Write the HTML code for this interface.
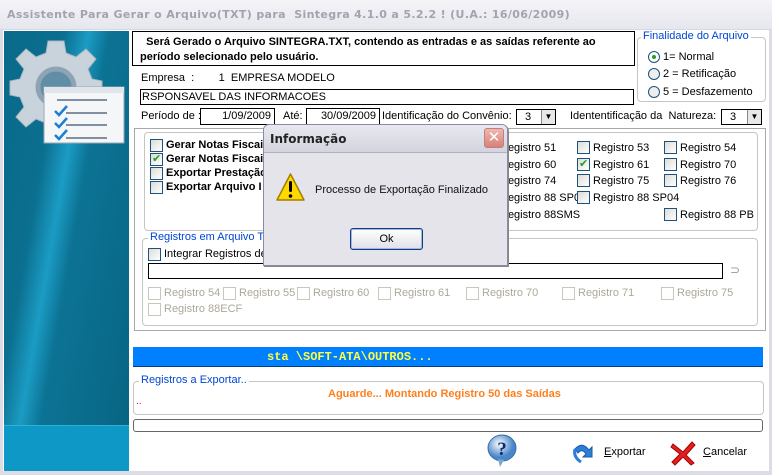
<!DOCTYPE html>
<html><head><meta charset="utf-8"><style>
*{margin:0;padding:0;box-sizing:border-box}
body{width:772px;height:475px;overflow:hidden;background:#fff;font-family:"Liberation Sans",sans-serif;font-size:11px;color:#000;position:relative}
.a{position:absolute;white-space:nowrap}
.cb{position:absolute;width:13px;height:13px;border:1px solid #1c5180;background:linear-gradient(135deg,#dcdcd6,#fff)}
.cbd{position:absolute;width:13px;height:13px;border:1px solid #c9c7ba;background:#fff}
.ck::after{content:"✔";position:absolute;left:1px;top:-2px;font-size:11px;color:#21a121}
.grp{position:absolute;border:1px solid #c5c5c5;border-radius:4px}
.leg{position:absolute;background:#fff;color:#0046d5;padding:0 2px;font-size:11px}
.in{position:absolute;border:1px solid #000;background:#fff}
.b{font-weight:bold}
.dis{color:#aca899}
</style></head><body>
<div class="a" style="left:0;top:0;width:772px;height:30px;background:linear-gradient(#f4f4f8,#e6e6ee);border-bottom:1px solid #d8d8e0"></div>
<div class="a" style="left:7px;top:8px;font-family:'DejaVu Sans',sans-serif;font-weight:bold;font-size:11px;color:#a3a3ad;letter-spacing:0.35px">Assistente Para Gerar o Arquivo(TXT) para&nbsp; Sintegra 4.1.0 a 5.2.2 ! (U.A.: 16/06/2009)</div>
<div class="a" style="left:0;top:30px;width:3px;height:445px;background:#dcdce6"></div>
<div class="a" style="left:769px;top:30px;width:3px;height:445px;background:#dcdce6"></div>
<div class="a" style="left:0;top:471px;width:772px;height:4px;background:#dcdce6"></div>

<div class="a" style="left:4px;top:31px;width:125px;height:440px;background:linear-gradient(100deg,#0a6a8a 0%,#0b6f90 30%,#1b9cc4 42%,#0c7395 52%,#086482 100%)"></div>
<div class="a" style="left:4px;top:425px;width:125px;height:46px;background:#0d98c5;border-top:1px solid #2bb0d8"></div>
<svg class="a" style="left:4px;top:31px" width="125" height="120" viewBox="0 0 125 120">
<g transform="translate(52,56)">
<path fill="#c9d3dc" stroke="#aab6c2" d="M-8,-46 L8,-46 L10,-34 L20,-30 L30,-38 L40,-28 L32,-18 L36,-8 L46,-6 L46,8 L36,10 L32,20 L40,30 L30,40 L20,32 L10,36 L8,46 L-8,46 L-10,36 L-20,32 L-30,40 L-40,30 L-32,20 L-36,10 L-46,8 L-46,-6 L-36,-8 L-32,-18 L-40,-28 L-30,-38 L-20,-30 L-10,-34 Z"/>
<circle r="18" fill="#5f8ea6" stroke="#8ea4b4" stroke-width="5"/>
</g>
<rect x="40" y="56" width="80" height="56" fill="#f4f6f8" stroke="#9aa8b4"/>
<rect x="40" y="56" width="80" height="6" fill="#dfe5ea"/>
<g stroke="#5a6e82" stroke-width="1.5"><line x1="53" y1="69" x2="103" y2="69"/><line x1="62" y1="82" x2="103" y2="82"/><line x1="62" y1="94" x2="103" y2="94"/><line x1="62" y1="107" x2="103" y2="107"/></g>
<g stroke="#1e7fd0" stroke-width="2.5" fill="none"><path d="M51,80 l4,4 l8,-9"/><path d="M51,92 l4,4 l8,-9"/><path d="M51,104 l4,4 l8,-9"/></g>
</svg>

<div class="a" style="left:132px;top:31px;width:503px;height:35px;border:1px solid #000"></div>
<div class="a b" style="left:140px;top:35px;font-size:11px;line-height:15px">&nbsp; Será Gerado o Arquivo SINTEGRA.TXT, contendo as entradas e as saídas referente ao<br>período selecionado pelo usuário.</div>

<div class="grp" style="left:637px;top:37px;width:129px;height:65px"></div>
<div class="leg" style="left:641px;top:30px">Finalidade do Arquivo</div>
<div class="a" style="left:648px;top:51px;width:12px;height:12px;border:1px solid #1c5180;border-radius:50%;background:#fff"><div style="position:absolute;left:3px;top:3px;width:4px;height:4px;border-radius:50%;background:#21a121"></div></div>
<div class="a" style="left:663px;top:51px">1= Normal</div>
<div class="a" style="left:648px;top:68px;width:12px;height:12px;border:1px solid #1c5180;border-radius:50%;background:#eee"></div>
<div class="a" style="left:663px;top:68px">2 = Retificação</div>
<div class="a" style="left:648px;top:86px;width:12px;height:12px;border:1px solid #1c5180;border-radius:50%;background:#eee"></div>
<div class="a" style="left:663px;top:86px">5 = Desfazemento</div>

<div class="a" style="left:141px;top:72px">Empresa&nbsp; :&nbsp;&nbsp;&nbsp;&nbsp;&nbsp;&nbsp;&nbsp; 1&nbsp; EMPRESA MODELO</div>
<div class="in" style="left:140px;top:89px;width:494px;height:16px"></div>
<div class="a" style="left:142px;top:91px">RSPONSAVEL DAS INFORMACOES</div>

<div class="a" style="left:141px;top:110px">Período de :</div>
<div class="in" style="left:200px;top:108px;width:75px;height:17px;text-align:right;padding-right:3px;line-height:15px">1/09/2009</div>
<div class="a" style="left:283px;top:110px">Até:</div>
<div class="in" style="left:306px;top:108px;width:74px;height:17px;text-align:right;padding-right:3px;line-height:15px">30/09/2009</div>
<div class="a" style="left:382px;top:110px">Identificação do Convênio:</div>
<div class="in" style="left:516px;top:109px;width:40px;height:16px;line-height:14px;padding-left:8px">3<div style="position:absolute;right:0;top:0;width:14px;height:14px;background:#e8e8e8;border-left:1px solid #888;font-size:8px;text-align:center">▼</div></div>
<div class="a" style="left:570px;top:110px">Idententificação da&nbsp; Natureza:</div>
<div class="in" style="left:721px;top:109px;width:41px;height:16px;line-height:14px;padding-left:8px">3<div style="position:absolute;right:0;top:0;width:14px;height:14px;background:#e8e8e8;border-left:1px solid #888;font-size:8px;text-align:center">▼</div></div>

<div class="a" style="left:134px;top:128px;width:632px;height:203px;border:1px solid #a8a8a8"></div>
<div class="grp" style="left:144px;top:132px;width:614px;height:99px"></div>
<div class="cb" style="left:150px;top:139px"></div><div class="a b" style="left:166px;top:139px">Gerar Notas Fiscais</div>
<div class="cb ck" style="left:150px;top:153px"></div><div class="a b" style="left:166px;top:153px">Gerar Notas Fiscais</div>
<div class="cb" style="left:150px;top:167px"></div><div class="a b" style="left:166px;top:167px">Exportar Prestação</div>
<div class="cb" style="left:150px;top:181px"></div><div class="a b" style="left:166px;top:181px">Exportar Arquivo I</div>

<div class="a" style="left:500px;top:142px">Registro 51</div>
<div class="a" style="left:500px;top:159px">Registro 60</div>
<div class="a" style="left:500px;top:175px">Registro 74</div>
<div class="a" style="left:500px;top:192px">Registro 88 SP03</div>
<div class="a" style="left:500px;top:209px">Registro 88SMS</div>
<div class="cb" style="left:577px;top:141px"></div><div class="a" style="left:593px;top:142px">Registro 53</div>
<div class="cb ck" style="left:577px;top:158px"></div><div class="a" style="left:593px;top:159px">Registro 61</div>
<div class="cb" style="left:577px;top:174px"></div><div class="a" style="left:593px;top:175px">Registro 75</div>
<div class="cb" style="left:577px;top:191px"></div><div class="a" style="left:593px;top:192px">Registro 88 SP04</div>
<div class="cb" style="left:664px;top:141px"></div><div class="a" style="left:680px;top:142px">Registro 54</div>
<div class="cb" style="left:664px;top:158px"></div><div class="a" style="left:680px;top:159px">Registro 70</div>
<div class="cb" style="left:664px;top:174px"></div><div class="a" style="left:680px;top:175px">Registro 76</div>
<div class="cb" style="left:664px;top:208px"></div><div class="a" style="left:680px;top:209px">Registro 88 PB</div>

<div class="grp" style="left:142px;top:238px;width:616px;height:88px"></div>
<div class="leg" style="left:148px;top:231px">Registros em Arquivo T</div>
<div class="cb" style="left:148px;top:248px"></div><div class="a" style="left:164px;top:248px">Integrar Registros de</div>
<div class="in" style="left:148px;top:263px;width:575px;height:16px"></div>
<div class="a" style="left:730px;top:263px;color:#999;font-size:12px">⊃</div>
<div class="cbd" style="left:148px;top:287px"></div><div class="a dis" style="left:164px;top:287px">Registro 54</div>
<div class="cbd" style="left:223px;top:287px"></div><div class="a dis" style="left:239px;top:287px">Registro 55</div>
<div class="cbd" style="left:297px;top:287px"></div><div class="a dis" style="left:313px;top:287px">Registro 60</div>
<div class="cbd" style="left:378px;top:287px"></div><div class="a dis" style="left:394px;top:287px">Registro 61</div>
<div class="cbd" style="left:466px;top:287px"></div><div class="a dis" style="left:482px;top:287px">Registro 70</div>
<div class="cbd" style="left:562px;top:287px"></div><div class="a dis" style="left:578px;top:287px">Registro 71</div>
<div class="cbd" style="left:661px;top:287px"></div><div class="a dis" style="left:677px;top:287px">Registro 75</div>
<div class="cbd" style="left:148px;top:303px"></div><div class="a dis" style="left:164px;top:303px">Registro 88ECF</div>

<div class="a" style="left:133px;top:347px;width:630px;height:20px;background:#0080ff;border-bottom:1px solid #004080"></div>
<div class="a" style="left:267px;top:350px;font-family:'Liberation Mono',monospace;font-weight:bold;font-size:12px;color:#ffff40">sta \SOFT-ATA\OUTROS...</div>

<div class="grp" style="left:133px;top:381px;width:631px;height:34px"></div>
<div class="leg" style="left:139px;top:374px">Registros a Exportar..</div>
<div class="a b" style="left:328px;top:388px;color:#ff7f1e">Aguarde... Montando Registro 50 das Saídas</div>
<div class="a" style="left:136px;top:396px;color:#e00;font-size:10px">..</div>
<div class="a" style="left:133px;top:419px;width:630px;height:13px;border:1px solid #666;border-radius:3px;background:#fff"></div>

<svg class="a" style="left:486px;top:434px" width="32" height="34" viewBox="0 0 32 34"><defs><radialGradient id="q" cx="0.4" cy="0.35"><stop offset="0" stop-color="#fff"/><stop offset="1" stop-color="#4a86c8"/></radialGradient></defs><ellipse cx="16" cy="14" rx="14" ry="13" fill="url(#q)" stroke="#3a6ea8"/><path d="M12,25 L14,33 L18,26" fill="#7aa6d8"/><text x="16" y="21" text-anchor="middle" font-family="Liberation Serif" font-weight="bold" font-size="19" fill="#0a2a70">?</text></svg>
<svg class="a" style="left:572px;top:441px" width="22" height="24" viewBox="0 0 22 24"><path d="M3,8 Q10,0 17,9 L20,6 L20,16 L11,16 L14,13 Q10,7 6,12 Z" fill="#2e7ed6" stroke="#1a5aa8"/><path d="M3,8 Q1,16 9,21" fill="none" stroke="#2e7ed6" stroke-width="3"/></svg>
<div class="a" style="left:604px;top:446px"><u>E</u>xportar</div>
<svg class="a" style="left:670px;top:440px" width="26" height="26" viewBox="0 0 26 26"><path d="M3,4 L13,12 L22,2 L25,5 L16,15 L24,23 L21,25 L13,17 L5,25 L2,22 L10,14 L1,7 Z" fill="#e02020" stroke="#a00"/></svg>
<div class="a" style="left:703px;top:446px"><u>C</u>ancelar</div>

<div class="a" style="left:263px;top:124px;width:245px;height:142px;border:1px solid #8a8aa0;border-radius:6px 6px 0 0;background:#e4e4ea;box-shadow:1px 1px 0 #888"></div>
<div class="a" style="left:264px;top:125px;width:243px;height:28px;border-radius:5px 5px 0 0;background:linear-gradient(#e8e8f0,#d4d4de);border-bottom:1px solid #b0b0c0"></div>
<div class="a b" style="left:270px;top:132px;font-family:'DejaVu Sans',sans-serif;font-size:12px;color:#222">Informação</div>
<div class="a" style="left:484px;top:128px;width:20px;height:20px;border:1px solid #c08080;border-radius:3px;background:linear-gradient(#f0b8b0,#d88078);color:#fff;font-size:15px;line-height:18px;text-align:center">✕</div>
<svg class="a" style="left:275px;top:172px" width="31" height="31" viewBox="0 0 31 31"><path d="M15.5,2 L29,28 L2,28 Z" fill="#ffd800" stroke="#a08000" stroke-linejoin="round" stroke-width="1.5"/><rect x="14" y="9" width="3" height="11" rx="1.5" fill="#000"/><circle cx="15.5" cy="24" r="1.8" fill="#000"/></svg>
<div class="a" style="left:315px;top:184px;font-size:11px;color:#111">Processo de Exportação Finalizado</div>
<div class="a" style="left:350px;top:228px;width:73px;height:22px;border:1px solid #1a3a7a;border-radius:3px;background:linear-gradient(#fff,#e0e0e8);box-shadow:inset 0 0 0 1px #9ab8e8;text-align:center;line-height:20px">Ok</div>
</body></html>
